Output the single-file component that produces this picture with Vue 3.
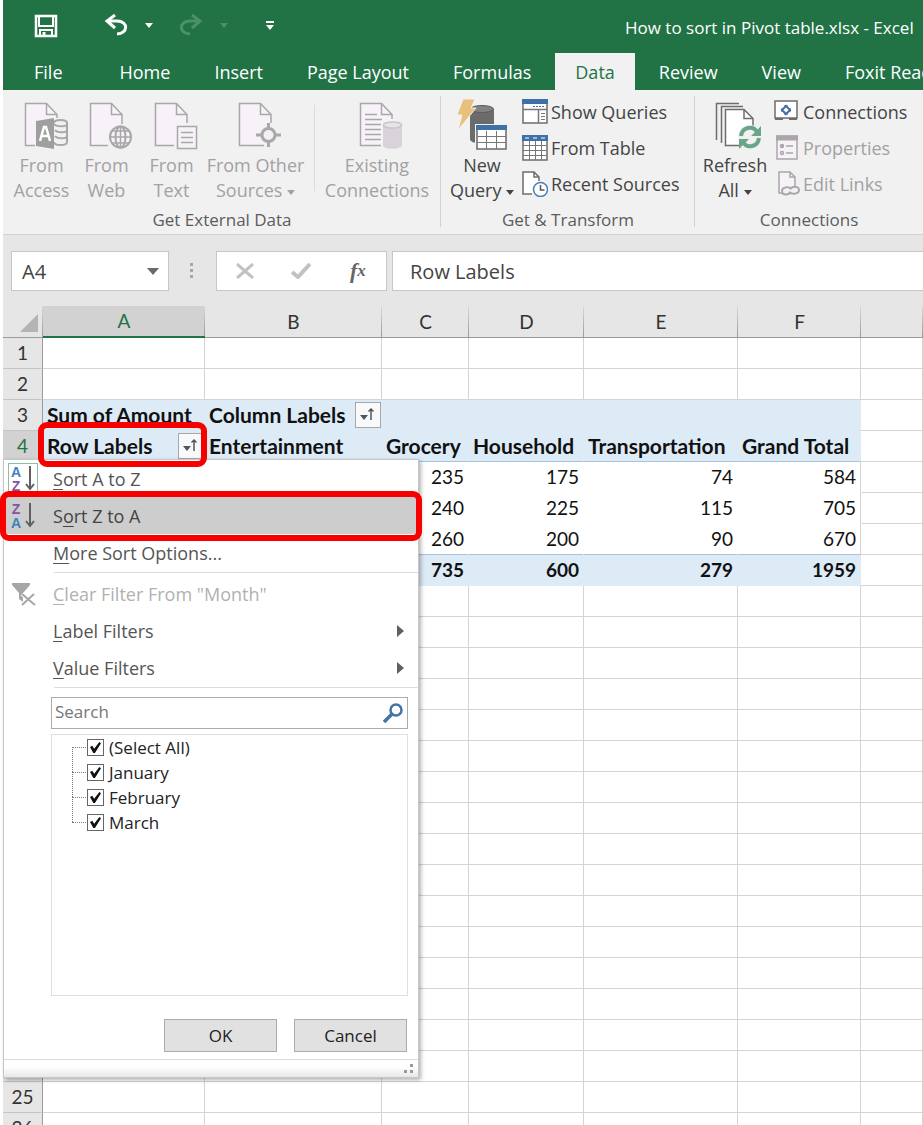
<template>
  <div class="excel">
    <header class="titlebar">
      <div class="quick-access">
        <button class="qa save" aria-label="Save">
          <svg width="24" height="24" viewBox="0 0 24 24" fill="none" stroke="#fff" stroke-width="2">
            <path d="M2 2h20v20H2z" stroke-width="2.500" />
            <path d="M5 2v10h14V2" />
            <path d="M6 22v-6h12v6" />
            <path d="M10 22v-4" stroke-width="3" />
          </svg>
        </button>
        <button class="qa undo" aria-label="Undo">
          <svg width="24" height="24" viewBox="0 0 24 24" fill="none" stroke="#fff" stroke-width="3">
            <path d="M11 1 3 7l8 7" />
            <path d="M3 7h10c12 0 11 13 0 13" />
          </svg>
          <svg width="8" height="5" viewBox="0 0 8 5" fill="#fff"><path d="M0 0h8L4 5z" /></svg>
        </button>
        <button class="qa redo" aria-label="Redo" disabled>
          <svg width="24" height="24" viewBox="0 0 24 24" fill="none" stroke="#4c9069" stroke-width="3">
            <path d="m13 1 8 6-8 7" />
            <path d="M21 7H11C-1 7 0 20 11 20" />
          </svg>
          <svg width="8" height="5" viewBox="0 0 8 5" fill="#4c9069"><path d="M0 0h8L4 5z" /></svg>
        </button>
        <button class="qa" aria-label="Customize Quick Access Toolbar">
          <svg width="10" height="10" viewBox="0 0 10 10" fill="#fff"><path d="M1 0h8v2H1zM1 4h8L5 9z" /></svg>
        </button>
      </div>
      <span class="title">How to sort in Pivot table.xlsx - Excel</span>
    </header>

    <nav class="tabs">
      <button
        v-for="tab in tabs"
        :key="tab"
        class="tab"
        :class="{ active: tab === activeTab, file: tab === 'File' }"
        @click="activeTab = tab"
      >{{ tab }}</button>
    </nav>

    <div class="ribbon">
      <section class="group external">
        <div class="tools">
          <button class="big" disabled>
            <svg class="icon" viewBox="0 0 48 48" fill="none" stroke="#a9a7a9">
              <path d="M17 44.500H7.500V2.500H28.500L39 13.500V17" fill="#f7f2f8" stroke-width="1.500" />
              <path d="M28.500 2.500v11H39" stroke-width="1.500" />
              <path d="M36 22c0-4 13-4 13 0v19c0 4-13 4-13 0M36 23c2 3 13 3 13 0M37 29c2 3 12 3 12 0M37 35c2 3 12 3 12 0" fill="#f1f1f1" stroke-width="2" />
              <path d="M18 20 36 17v31l-18-3z" fill="#a09fa0" stroke="none" />
              <path d="m22 40 4-14h2l4 14M23.500 35h7" stroke="#fff" stroke-width="2.500" />
            </svg>
            <span>From<br>Access</span>
          </button>
          <button class="big" disabled>
            <svg class="icon" viewBox="0 0 48 48" fill="none" stroke="#a9a7a9">
              <path d="M25 44.500H7.500V2.500H28.500L39 13.500V23" fill="#f7f2f8" stroke-width="1.500" />
              <path d="M28.500 2.500v11H39" stroke-width="1.500" />
              <circle cx="37.500" cy="36" r="12.500" fill="#f1f1f1" stroke="none" />
              <g stroke-width="2">
                <circle cx="37.500" cy="36" r="10.500" fill="#f7f2f8" />
                <ellipse cx="37.500" cy="36" rx="5" ry="10.500" />
                <path d="M37.500 25.500v21M27 36h21M29 30h17M29 42h17" stroke-width="1.500" />
              </g>
            </svg>
            <span>From<br>Web</span>
          </button>
          <button class="big" disabled>
            <svg class="icon" viewBox="0 0 48 48" fill="none" stroke="#a9a7a9" stroke-width="1.500">
              <path d="M26 44.500H7.500V2.500H28.500L39 13.500V22" fill="#f7f2f8" />
              <path d="M28.500 2.500v11H39" />
              <path d="M29.500 25.500h19v22h-19z" fill="#f7f2f8" />
              <path d="M33 31.500h12M33 36.500h12M33 41.500h12" />
            </svg>
            <span>From<br>Text</span>
          </button>
          <button class="big other" disabled>
            <svg class="icon" viewBox="0 0 48 48" fill="none" stroke="#a9a7a9">
              <path d="M32 44.500H7.500V2.500H28.500L39 13.500V22" fill="#f7f2f8" stroke-width="1.500" />
              <path d="M28.500 2.500v11H39" stroke-width="1.500" />
              <circle cx="36.500" cy="34" r="9" fill="#f1f1f1" stroke="none" />
              <g stroke-width="3">
                <circle cx="36.500" cy="34" r="6.500" />
                <path d="M36.500 22v6M36.500 40v6M24 34h6M43 34h6" />
              </g>
            </svg>
            <span>From Other<br>Sources <i class="caret"></i></span>
          </button>
          <span class="divider"></span>
          <button class="big existing" disabled>
            <svg class="icon" viewBox="0 0 48 48" fill="none" stroke="#a9a7a9" stroke-width="1.500">
              <path d="M28 44.500H7.500V2.500H28.500L39 13.500V18" fill="#f7f2f8" />
              <path d="M28.500 2.500v11H39M12 13.500h12M12 18.500h17M12 23.500h16M12 28.500h16M12 33.500h16M12 38.500h16" />
              <path d="M30 24v20c0 5 19 5 19 0V24z" fill="#d8d2d9" stroke="none" />
              <ellipse cx="39.500" cy="24" rx="9" ry="3" fill="#e8e3e9" stroke="#c9c4ca" />
            </svg>
            <span>Existing<br>Connections</span>
          </button>
        </div>
        <h2>Get External Data</h2>
      </section>

      <section class="group transform">
        <div class="tools">
          <button class="big">
            <svg class="icon" viewBox="0 0 48 48" fill="none">
              <path d="M12 8v30c0 3 5 4 8 4h16V8z" fill="#6b6b6b" />
              <ellipse cx="24" cy="8" rx="11.500" ry="3.500" fill="#828282" stroke="#5d5d5d" />
              <path d="M5-2h12l-4 9h5L0 29 4 14h-5z" fill="#e8bf7b" stroke="#f1f1f1" />
              <path d="M17 23h33v26H17z" fill="#f1f1f1" />
              <path d="M19 25h29v23H19z" fill="#fff" stroke="#686868" stroke-width="1.500" />
              <path d="M18 24h31v5H18z" fill="#3f70a7" />
              <path d="M19 35.500h29M19 41.500h29M28.500 30v18M38.500 30v18" stroke="#777" />
            </svg>
            <span>New<br>Query <i class="caret"></i></span>
          </button>
          <div class="stack">
            <button class="small">
              <svg class="mini" viewBox="0 0 26 26" fill="none">
                <path d="M1 1h24v23H1z" fill="#fff" stroke="#6d6d6d" stroke-width="1.500" />
                <path d="M0 0h26v5H0z" fill="#3f70a7" />
                <path d="M1 10.500h24M16.500 10v14" stroke="#777" stroke-width="1.500" />
                <path d="M11 7.500h12" stroke="#3f70a7" stroke-dasharray="2 1" />
                <path d="M19 14.500h4M19 17.500h4M19 20.500h4" stroke="#777" />
              </svg>Show Queries
            </button>
            <button class="small">
              <svg class="mini" viewBox="0 0 26 26" fill="none">
                <path d="M1 1h24v24H1z" fill="#fff" stroke="#6d6d6d" stroke-width="1.500" />
                <path d="M0 0h26v6H0z" fill="#3f70a7" />
                <path d="M3 3h4M11 3h4M19 3h4" stroke="#fff" />
                <path d="M1 10.500h24M1 15.500h24M1 20.500h24M7.500 6v19M13.500 6v19M19.500 6v19" stroke="#777" />
              </svg>From Table
            </button>
            <button class="small">
              <svg class="mini" viewBox="0 0 26 26" fill="none">
                <path d="M10 23H1V1h11l5 5v4" fill="#fff" stroke="#6d6d6d" stroke-width="1.500" />
                <path d="M12 1v5h5" stroke="#6d6d6d" stroke-width="1.500" />
                <circle cx="18.500" cy="18.500" r="7" fill="#fff" stroke="#4a7ebb" stroke-width="1.500" />
                <path d="M18.500 14v5h4" stroke="#555" stroke-width="1.500" />
              </svg>Recent Sources
            </button>
          </div>
        </div>
        <h2>Get &amp; Transform</h2>
      </section>

      <section class="group connections">
        <div class="tools">
          <button class="big">
            <svg class="icon" viewBox="0 0 48 48" fill="none" stroke="#6d6d6d" stroke-width="1.500">
              <path d="M5.500 39V2.500H28M10.500 42V5.500H32" />
              <path d="M28 44.500H14.500V8.500H33l9 9V30" fill="#fff" />
              <path d="M33 8.500v9h9" />
              <circle cx="39" cy="36" r="12" fill="#f1f1f1" stroke="none" />
              <g stroke="#6aa58a" stroke-width="4">
                <path d="M30 35c1-9 12-11 16-4M48 37c-1 9-12 11-16 4" />
              </g>
              <path d="M50 25v10H40zM28 48V38h10z" fill="#6aa58a" stroke="none" />
            </svg>
            <span>Refresh<br>All <i class="caret"></i></span>
          </button>
          <div class="stack">
            <button class="small">
              <svg class="mini" viewBox="0 0 26 26" fill="none">
                <path d="M1 2h22v17H1z" fill="#fff" stroke="#6d6d6d" stroke-width="1.500" />
                <path d="M1 20h8M15 20h8" stroke="#6d6d6d" stroke-width="2" />
                <path d="m12 7 4 4-4 4-4-4z" stroke="#3f70a7" stroke-width="2" />
                <path d="M12 6v2M12 14v2M7 11h2M15 11h2" stroke="#3f70a7" stroke-width="3" />
              </svg>Connections
            </button>
            <button class="small" disabled>
              <svg class="mini" viewBox="0 0 26 26" fill="none" stroke="#a9a7a9" stroke-width="1.500">
                <path d="M3 1h20v23H3z" fill="#f7f2f8" />
                <path d="M2 3h22" stroke-width="5" />
                <circle cx="8" cy="11" r="1.500" fill="#a9a7a9" />
                <circle cx="8" cy="18" r="1.500" />
                <path d="M12 11h7M12 18h7" />
              </svg>Properties
            </button>
            <button class="small" disabled>
              <svg class="mini" viewBox="0 0 26 26" fill="none" stroke="#a9a7a9" stroke-width="1.500">
                <path d="M8 22H5V1h11l5 5v9" fill="#f7f2f8" />
                <path d="M16 1v5h5" />
                <path d="M17 18c-2-3-9-2-9 2 0 5 7 4 9 1M15 21c3 3 10 2 10-2 0-4-6-4-9-1" stroke-width="2" />
              </svg>Edit Links
            </button>
          </div>
        </div>
        <h2>Connections</h2>
      </section>
    </div>

    <div class="formula-bar">
      <div class="name-box">
        <input v-model="cellName" aria-label="Name box">
        <svg width="12" height="7" viewBox="0 0 12 7" fill="#6a6a6a"><path d="M0 0h12L6 7z" /></svg>
      </div>
      <svg class="grip" width="4" height="16" viewBox="0 0 4 16" fill="#a6a6a6"><path d="M0 0h3v3H0zM0 6h3v3H0zM0 12h3v3H0z" /></svg>
      <div class="fx-box">
        <button aria-label="Cancel entry">
          <svg width="18" height="16" viewBox="0 0 18 16" stroke="#c2c2c2" stroke-width="3"><path d="m1 1 16 14M17 1 1 15" /></svg>
        </button>
        <button aria-label="Enter">
          <svg width="20" height="16" viewBox="0 0 20 16" fill="none" stroke="#c2c2c2" stroke-width="4"><path d="m1 9 6 5L19 1" /></svg>
        </button>
        <button class="fx" aria-label="Insert function">f<small>x</small></button>
      </div>
      <input v-model="formula" class="formula" aria-label="Formula">
    </div>

    <main class="sheet">
      <table>
        <colgroup>
          <col class="w-head">
          <col class="w-a">
          <col class="w-b">
          <col class="w-c">
          <col class="w-d">
          <col class="w-e">
          <col class="w-f">
          <col>
        </colgroup>
        <thead>
          <tr>
            <th class="corner">
              <svg width="18" height="18" viewBox="0 0 18 18" fill="#b4b4b4"><path d="M18 0v18H0z" /></svg>
            </th>
            <th v-for="col in columns" :key="col" :class="{ selected: col === 'A' }">{{ col }}</th>
            <th></th>
          </tr>
        </thead>
        <tbody>
          <tr v-for="n in 26" :key="n" :class="rowClass(n)">
            <th :class="{ selected: n === 4 }">{{ isCovered(n) ? '' : n }}</th>
            <td v-for="(col, i) in columns" :key="col" :class="{ num: n > 4 }">
              {{ cells[n] ? cells[n][i] : '' }}
              <button
                v-if="(n === 3 && col === 'B') || (n === 4 && col === 'A')"
                class="filter"
                aria-label="Filter"
                @click="menuOpen = !menuOpen"
              >
                <svg width="16" height="16" viewBox="0 0 16 16" fill="#555">
                  <path d="M0 8h8l-4 5z" />
                  <path d="M11 2v11M8.500 4.500 11 2l2.500 2.500" fill="none" stroke="#555" stroke-width="1.500" />
                </svg>
              </button>
            </td>
            <td></td>
          </tr>
        </tbody>
      </table>

      <div class="callout"></div>

      <div v-if="menuOpen" class="menu">
        <button class="item">
          <span class="sort-icon boxed">
            <span class="letters"><b class="blue">A</b><b class="purple">Z</b></span>
            <svg width="10" height="26" viewBox="0 0 10 26" fill="none" stroke="#606060" stroke-width="2"><path d="M5 0v23M1 18l4 5 4-5" /></svg>
          </span>
          <span><u>S</u>ort A to Z</span>
        </button>
        <button class="item hover">
          <span class="sort-icon">
            <span class="letters"><b class="purple">Z</b><b class="blue">A</b></span>
            <svg width="10" height="26" viewBox="0 0 10 26" fill="none" stroke="#606060" stroke-width="2"><path d="M5 0v23M1 18l4 5 4-5" /></svg>
          </span>
          <span>S<u>o</u>rt Z to A</span>
        </button>
        <button class="item"><span><u>M</u>ore Sort Options...</span></button>
        <hr>
        <button class="item" disabled>
          <svg class="funnel" width="24" height="25" viewBox="0 0 24 25">
            <path d="M0 1h18v2l-7 8v9l-4-3v-6L0 3z" fill="#a6a6a6" />
            <path d="m10 12 13 11M22 12 10 23" stroke="#fff" stroke-width="4" />
            <path d="m10 12 13 11M22 12 10 23" stroke="#a6a6a6" stroke-width="2" />
          </svg>
          <span><u>C</u>lear Filter From "Month"</span>
        </button>
        <button class="item">
          <span><u>L</u>abel Filters</span>
          <svg class="arrow" width="7" height="12" viewBox="0 0 7 12" fill="#606060"><path d="M0 0v12l7-6z" /></svg>
        </button>
        <button class="item">
          <span><u>V</u>alue Filters</span>
          <svg class="arrow" width="7" height="12" viewBox="0 0 7 12" fill="#606060"><path d="M0 0v12l7-6z" /></svg>
        </button>
        <hr>
        <div class="panel">
          <div class="search">
            <input v-model="search" placeholder="Search" aria-label="Search">
            <svg width="20" height="20" viewBox="0 0 20 20" fill="none" stroke="#4474a5">
              <circle cx="13" cy="7" r="5.500" stroke-width="2.500" />
              <path d="m9 11-8 8" stroke-width="3.500" />
            </svg>
          </div>
          <ul class="list">
            <li v-for="m in months" :key="m.label">
              <label><input v-model="m.checked" type="checkbox">{{ m.label }}</label>
            </li>
          </ul>
          <div class="actions">
            <button @click="menuOpen = false">OK</button>
            <button @click="menuOpen = false">Cancel</button>
          </div>
        </div>
        <div class="resize">
          <svg width="10" height="10" viewBox="0 0 10 10" fill="#9a9a9a"><path d="M6 0h3v3H6zM0 6h3v3H0zM6 6h3v3H6z" /></svg>
        </div>
      </div>
    </main>
  </div>
</template>

<script setup>
import { ref } from 'vue'

const tabs = ['File', 'Home', 'Insert', 'Page Layout', 'Formulas', 'Data', 'Review', 'View', 'Foxit Reader']
const activeTab = ref('Data')

const cellName = ref('A4')
const formula = ref('Row Labels')
const search = ref('')
const menuOpen = ref(true)

const columns = ['A', 'B', 'C', 'D', 'E', 'F']

// pivot table content, by row number
const cells = {
  3: ['Sum of Amount', 'Column Labels', '', '', '', ''],
  4: ['Row Labels', 'Entertainment', 'Grocery', 'Household', 'Transportation', 'Grand Total'],
  5: ['', '', 235, 175, 74, 584],
  6: ['', '', 240, 225, 115, 705],
  7: ['', '', 260, 200, 90, 670],
  8: ['', '', 735, 600, 279, 1959]
}

const months = ref([
  { label: '(Select All)', checked: true },
  { label: 'January', checked: true },
  { label: 'February', checked: true },
  { label: 'March', checked: true }
])

// rows 5 to 24 lie under the open filter menu
const isCovered = (n) => menuOpen.value && n > 4 && n < 25

const rowClass = (n) => ({
  filled: n === 3 || n === 4 || n === 8,
  labels: n === 3 || n === 4,
  plain: n >= 5 && n <= 7,
  ruled: n === 4 || n === 7
})
</script>

<style>
body {
  background: #fff;
}
</style>

<style scoped>
* {
  box-sizing: border-box;
}
.excel {
  height: 100vh;
  padding-left: 3px;
  overflow: hidden;
  display: flex;
  flex-direction: column;
  font-family: "Open Sans", "Noto Sans", sans-serif;
  font-size: 18px;
  color: #444;
}
button {
  border: 0;
  padding: 0;
  background: none;
  font: inherit;
  color: inherit;
}
input {
  font: inherit;
  color: inherit;
}
svg {
  display: block;
  flex: none;
}

/* title bar */
.titlebar {
  flex: none;
  display: flex;
  align-items: center;
  height: 53px;
  padding: 0 0 2px 31px;
  background: #217346;
  color: #fff;
}
.quick-access {
  flex: none;
  display: flex;
  align-items: center;
  width: 591px;
}
.qa {
  display: flex;
  align-items: center;
  gap: 17px;
}
.save {
  margin-right: 46px;
}
.undo {
  margin-right: 26px;
}
.redo {
  margin-right: 37px;
}
.title {
  padding-top: 3px;
  font-size: 17px;
  white-space: nowrap;
}
.tabs {
  flex: none;
  display: flex;
  height: 37px;
  padding-left: 11px;
  background: #217346;
  overflow: hidden;
}
.tab {
  flex: none;
  padding: 0 20px;
  margin-right: 4px;
  color: #fff;
}
.tab.file {
  margin-right: 17px;
}
.tab.active {
  background: #f1f1f1;
  color: #217346;
}

/* ribbon */
.ribbon {
  flex: none;
  display: flex;
  height: 145px;
  background: #f1f1f1;
  border-bottom: 1px solid #d2d2d2;
  overflow: hidden;
}
.group {
  position: relative;
  flex: none;
  padding: 11px 6px 0;
}
.group::after {
  content: "";
  position: absolute;
  top: 6px;
  bottom: 7px;
  right: 0;
  width: 1px;
  background: #d2d2d2;
}
.connections::after {
  display: none;
}
.external {
  width: 438px;
}
.transform {
  width: 254px;
}
.connections {
  width: 228px;
}
.tools {
  display: flex;
  height: 108px;
}
.group h2 {
  margin: 0;
  font-size: 17px;
  line-height: 22px;
  font-weight: normal;
  text-align: center;
  color: #5c5c5c;
}
.big {
  flex: none;
  display: flex;
  flex-direction: column;
  align-items: center;
  gap: 4px;
  width: 65px;
  line-height: 25px;
  white-space: nowrap;
}
.big.other {
  width: 103px;
}
.big.existing {
  width: 106px;
}
.big:disabled,
.small:disabled {
  color: #a3a1a3;
}
.icon {
  width: 48px;
  height: 48px;
  overflow: visible;
}
.caret {
  display: inline-block;
  vertical-align: middle;
  border: 4px solid transparent;
  border-top: 5px solid currentColor;
  border-bottom: 0;
}
.divider {
  width: 1px;
  height: 86px;
  margin: 4px 9px 0 7px;
  background: #dcdcdc;
}
.transform .big {
  width: 70px;
}
.connections .big {
  width: 68px;
}
.stack {
  display: flex;
  flex-direction: column;
  margin-top: -7px;
}
.small {
  display: flex;
  align-items: center;
  gap: 3px;
  height: 36px;
  padding-left: 5px;
  white-space: nowrap;
}
.mini {
  width: 26px;
  height: 26px;
}

/* formula bar */
.formula-bar {
  flex: none;
  display: flex;
  align-items: center;
  padding: 16px 0 15px 8px;
  background: #e6e6e6;
}
.name-box,
.fx-box,
.formula {
  height: 40px;
  border: 1px solid #c6c6c6;
  background: #fff;
  font-size: 20px;
}
.name-box {
  display: flex;
  align-items: center;
  width: 158px;
  padding: 0 9px 0 10px;
}
.name-box input {
  flex: 1;
  min-width: 0;
  padding: 0;
  border: 0;
  outline: 0;
}
.grip {
  margin: 0 22px 0 21px;
}
.fx-box {
  display: flex;
  width: 171px;
  margin-right: 5px;
}
.fx-box button {
  flex: 1;
  display: flex;
  align-items: center;
  justify-content: center;
}
.fx-box .fx {
  font: italic bold 22px "Liberation Serif", serif;
  color: #666;
}
.fx small {
  font-size: 17px;
}
.formula {
  flex: 1;
  min-width: 0;
  padding: 0 17px;
  border-right: 0;
}

/* sheet */
.sheet {
  position: relative;
  flex: 1;
  min-height: 0;
}
table {
  width: 100%;
  table-layout: fixed;
  border-collapse: separate;
  border-spacing: 0;
  font-family: Lato, "Open Sans", sans-serif;
  font-size: 19px;
  color: #111;
}
.w-head {
  width: 40px;
}
.w-a {
  width: 162px;
}
.w-b {
  width: 177px;
}
.w-c {
  width: 87px;
}
.w-d {
  width: 115px;
}
.w-e {
  width: 154px;
}
.w-f {
  width: 123px;
}
th,
td {
  position: relative;
  height: 31px;
  padding: 0 4px;
  line-height: 30px;
  white-space: nowrap;
}
th {
  padding: 0;
  font-weight: normal;
  color: #333;
  background: #e6e6e6;
}
thead th {
  border-bottom: 1px solid #9b9b9b;
  background: linear-gradient(#d8d8d8, #9b9b9b) right / 1px 100% no-repeat #e6e6e6;
}
tbody th {
  border-right: 1px solid #9b9b9b;
  border-bottom: 1px solid #c4c4c4;
}
.corner svg {
  position: absolute;
  right: 5px;
  bottom: 5px;
}
th.selected {
  background-color: #d2d2d2;
  color: #217346;
}
thead th.selected {
  border-bottom: 2px solid #217346;
}
td {
  border-right: 1px solid #d4d4d4;
  border-bottom: 1px solid #d4d4d4;
  text-align: left;
}
td.num {
  text-align: right;
}
.filled td:not(:last-child) {
  border-color: #ddebf7;
  background: #ddebf7;
  font-weight: bold;
}
.labels td {
  font-size: 21px;
}
.plain td:not(:last-child) {
  border-bottom-color: transparent;
}
.plain td:not(:nth-last-child(-n + 2)) {
  border-right-color: transparent;
}
.ruled td:not(:last-child) {
  border-bottom-color: #a5c3de;
}
.filter {
  position: absolute;
  top: 2px;
  right: 0;
  width: 26px;
  height: 26px;
  display: flex;
  align-items: center;
  justify-content: center;
  border: 1px solid #a6a6a6;
  background: #f8f9fb;
}
.callout {
  position: absolute;
  z-index: 3;
  top: 116px;
  left: 35px;
  width: 169px;
  height: 45px;
  border: 6px solid #f60000;
  border-radius: 9px;
}

/* filter menu */
.menu {
  position: absolute;
  z-index: 2;
  top: 153px;
  left: 0;
  width: 416px;
  border: 1px solid #c6c6c6;
  background: #fff;
  box-shadow: 2px 2px 4px rgba(0, 0, 0, 0.3);
  color: #555;
}
.item {
  position: relative;
  display: flex;
  align-items: center;
  width: 100%;
  height: 37px;
  padding-left: 49px;
  text-align: left;
}
.item:disabled {
  color: #b1b1b1;
}
.item u {
  text-decoration-skip-ink: none;
  text-underline-offset: 3px;
}
.item.hover {
  background: #cdcdcd;
  color: #444;
}
.item.hover::after {
  content: "";
  position: absolute;
  inset: -6px -4px -7px;
  border: 6px solid #f60000;
  border-radius: 9px;
}
.sort-icon {
  position: absolute;
  left: 4px;
  top: 3px;
  display: flex;
  align-items: center;
  justify-content: center;
  gap: 4px;
  width: 30px;
  height: 31px;
  border: 1px solid transparent;
}
.sort-icon.boxed {
  border-color: #8cc0a4;
}
.letters {
  display: flex;
  flex-direction: column;
  font-family: "Liberation Sans", sans-serif;
  font-size: 14px;
  line-height: 14px;
  text-align: center;
}
.blue {
  color: #3f81bb;
}
.purple {
  color: #8353a5;
}
.funnel {
  position: absolute;
  left: 8px;
  top: 7px;
}
.arrow {
  margin-left: auto;
  margin-right: 14px;
}
hr {
  height: 1px;
  margin: 1px 0 2px 50px;
  border: 0;
  background: #dcdcdc;
}
.panel {
  padding: 7px 10px 7px 47px;
}
.search {
  display: flex;
  align-items: center;
  height: 32px;
  padding: 0 4px 0 3px;
  border: 1px solid #ababab;
}
.search input {
  flex: 1;
  min-width: 0;
  height: 28px;
  padding: 0 0 4px;
  border: 0;
  outline: 0;
  font-size: 17px;
}
.search input::placeholder {
  color: #767676;
}
.list {
  height: 262px;
  margin: 5px 0 23px;
  padding: 0 0 0 20px;
  border: 1px solid #e0e0e0;
  list-style: none;
  font-size: 17px;
  color: #222;
}
.list li {
  position: relative;
  height: 25px;
  padding-left: 15px;
}
.list li::before {
  content: "";
  position: absolute;
  top: 12px;
  left: 0;
  width: 14px;
  border-top: 1px dotted #777;
}
.list li:not(:last-child)::after {
  content: "";
  position: absolute;
  top: 12px;
  left: 0;
  height: 25px;
  border-left: 1px dotted #777;
}
.list label {
  display: flex;
  align-items: center;
  gap: 5px;
  height: 25px;
}
.list input {
  appearance: none;
  width: 17px;
  height: 17px;
  margin: 0;
  border: 1px solid #666;
  background: #fff;
}
.list input:checked::before {
  content: "";
  display: block;
  width: 11px;
  height: 11px;
  margin: 2px;
  background: #111;
  clip-path: polygon(0 45%, 20% 35%, 38% 62%, 85% 0, 100% 12%, 45% 100%, 30% 100%);
}
.actions {
  display: flex;
  justify-content: flex-end;
  gap: 17px;
  padding-right: 1px;
}
.actions button {
  width: 113px;
  height: 33px;
  border: 1px solid #ababab;
  background: #e1e1e1;
  font-size: 17px;
  color: #222;
}
.resize {
  display: flex;
  align-items: flex-end;
  justify-content: flex-end;
  height: 18px;
  padding: 0 4px 3px;
  border-top: 1px solid #dcdcdc;
  background: linear-gradient(#fff 40%, #e8e8e8);
}
</style>
